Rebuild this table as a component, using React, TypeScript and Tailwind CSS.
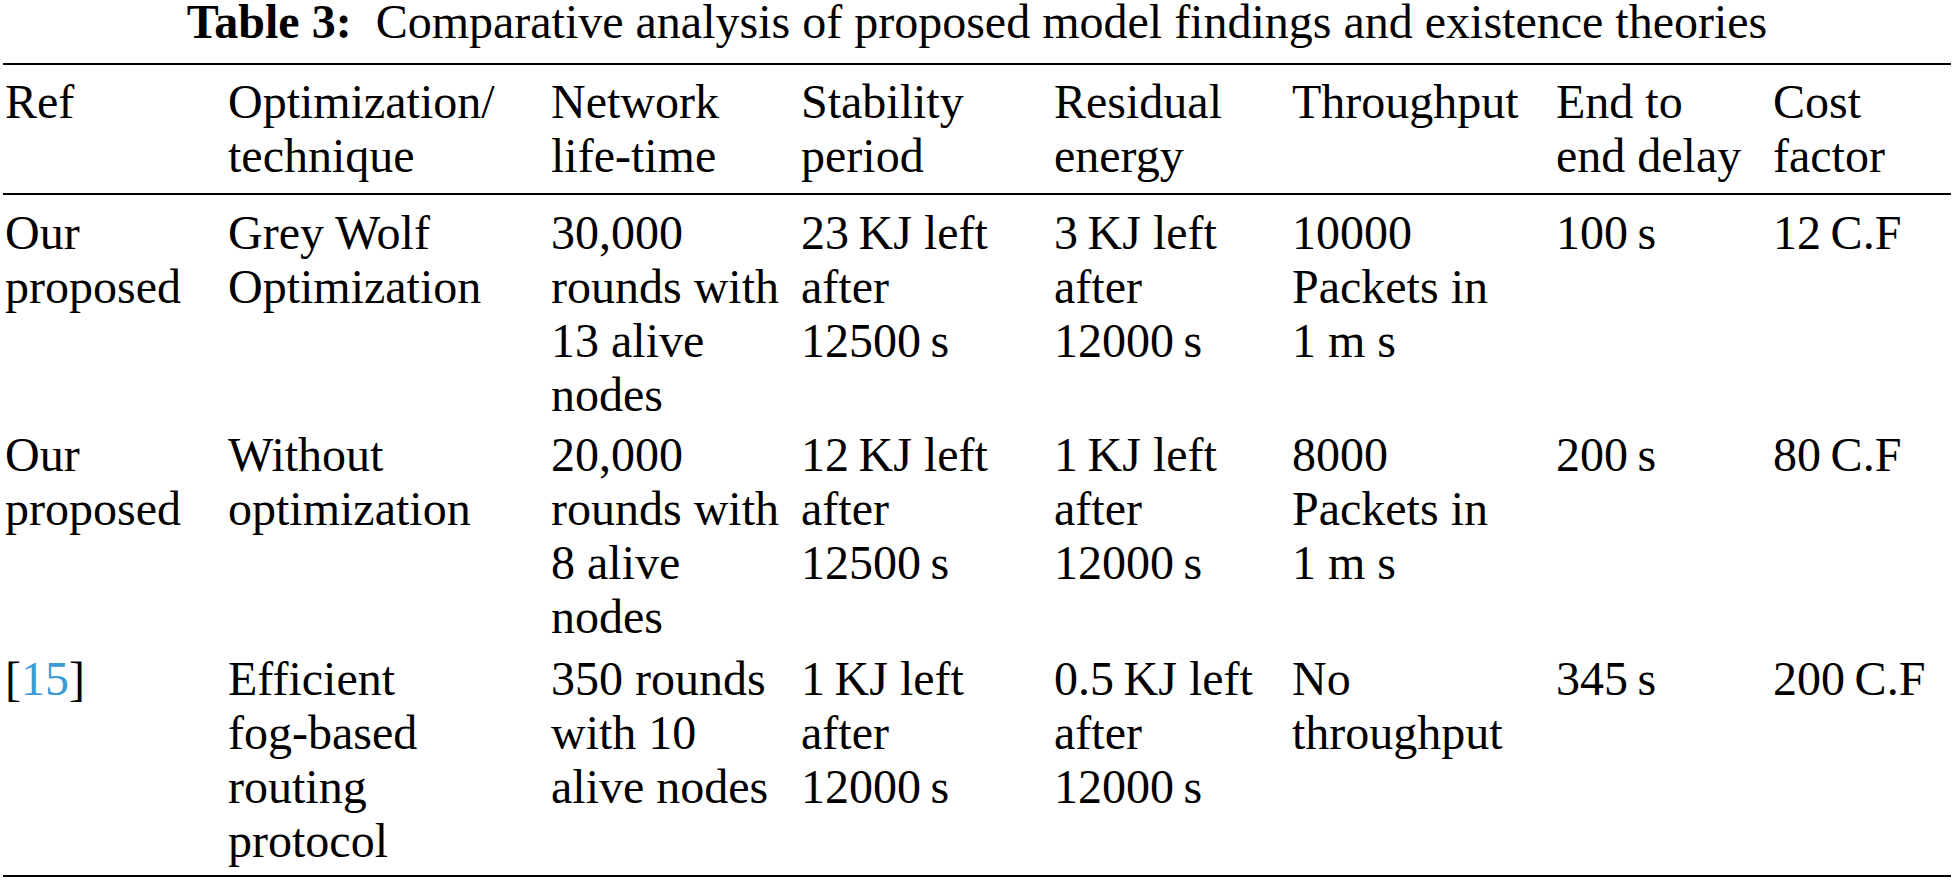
import React from "react";

const T = "\u2009";

type Cell = React.ReactNode[];

const header: Cell[] = [
  ["Ref"],
  ["Optimization/", "technique"],
  ["Network", "life-time"],
  ["Stability", "period"],
  ["Residual", "energy"],
  ["Throughput"],
  ["End to", "end delay"],
  ["Cost", "factor"],
];

const rows: Cell[][] = [
  [
    ["Our", "proposed"],
    ["Grey Wolf", "Optimization"],
    ["30,000", "rounds with", "13 alive", "nodes"],
    [`23${T}KJ left`, "after", `12500${T}s`],
    [`3${T}KJ left`, "after", `12000${T}s`],
    ["10000", "Packets in", "1 m s"],
    [`100${T}s`],
    [`12${T}C.F`],
  ],
  [
    ["Our", "proposed"],
    ["Without", "optimization"],
    ["20,000", "rounds with", "8 alive", "nodes"],
    [`12${T}KJ left`, "after", `12500${T}s`],
    [`1${T}KJ left`, "after", `12000${T}s`],
    ["8000", "Packets in", "1 m s"],
    [`200${T}s`],
    [`80${T}C.F`],
  ],
  [
    [
      <span key="r">
        [<span className="text-[#3a9bd5]">15</span>]
      </span>,
    ],
    ["Efficient", "fog-based", "routing", "protocol"],
    ["350 rounds", "with 10", "alive nodes"],
    [`1${T}KJ left`, "after", `12000${T}s`],
    [`0.5${T}KJ left`, "after", `12000${T}s`],
    ["No", "throughput"],
    [`345${T}s`],
    [`200${T}C.F`],
  ],
];

const rowPad = ["pt-[11px] pb-[3px]", "pt-[3px] pb-[4px]", "pt-[4px] pb-[7px]"];

function Row({ cells, className }: { cells: Cell[]; className: string }) {
  return (
    <div
      className={`grid grid-cols-[223px_323px_250px_253px_238px_264px_217px_1fr] pl-[2px] ${className}`}
    >
      {cells.map((c, i) => (
        <div key={i} className="flex flex-col whitespace-nowrap">
          {c.map((line, j) => (
            <div key={j}>{line}</div>
          ))}
        </div>
      ))}
    </div>
  );
}

export default function App() {
  return (
    <div className="w-[1954px] h-[883px] bg-white text-black font-['Liberation_Serif','Times_New_Roman',serif] text-[48px] leading-[54px] overflow-hidden">
      <div className="pt-[1px] text-center text-[48px] leading-[42px] whitespace-nowrap">
        <span className="font-bold">Table 3:</span>
        {"\u00a0\u00a0"}Comparative analysis of proposed model findings and existence theories
      </div>
      <div className="ml-[3px] w-[1948px] mt-[20px] border-t-2 border-black">
        <Row cells={header} className="pt-[10px] pb-[10px]" />
        <div className="border-t-2 border-black">
          {rows.map((r, i) => (
            <Row key={i} cells={r} className={rowPad[i]} />
          ))}
        </div>
        <div className="border-t-2 border-black" />
      </div>
    </div>
  );
}
